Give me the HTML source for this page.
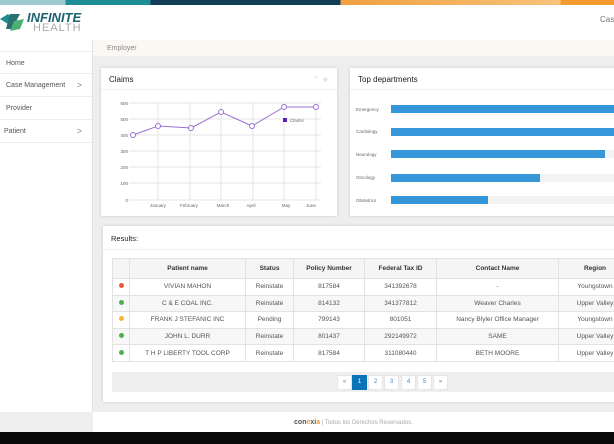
<!DOCTYPE html>
<html><head><style>
*{margin:0;padding:0;box-sizing:border-box}
body{width:614px;height:444px;overflow:hidden;background:#eeeeee;font-family:"Liberation Sans",sans-serif;position:relative;color:#444}
.a{position:absolute}
.top{left:0;top:0;width:614px;height:5px;background:linear-gradient(90deg,#9fc9cf 0,#9fc9cf 65px,#1e8d96 66px,#1e8d96 150px,#123d57 151px,#123d57 340px,#f0a040 341px,#f7c27a 560px,#f29a2e 561px)}
.hdr{left:0;top:5px;width:614px;height:35px;background:#fff}
.side{left:0;top:40px;width:93px;height:372px;background:#fff;border-right:1px solid #e4e4e4;padding-top:11px}
.side div{height:23px;border-bottom:1px solid #eee;font-size:7px;color:#555;padding:8px 6px;position:relative}
.side div:first-child{border-top:1px solid #eee}
.side span{position:absolute;right:10px;top:6px;font-size:9px;color:#888}
.emp{left:93px;top:40px;width:521px;height:17px;background:#fbf8f3;border-bottom:1px solid #eee;font-size:7px;color:#888;padding:5px 14px}
.panel{background:#fff;box-shadow:0 0 3px rgba(0,0,0,.15)}
.ttl{font-size:8px;color:#222;padding:7px 8px;border-bottom:1px solid #f0f0f0;height:22px}
table{border-collapse:collapse;position:absolute;left:9px;top:32px;width:520px;font-size:6.5px;color:#555}
td,th{border:1px solid #e2e2e2;text-align:center;height:16.6px;padding:0}
th{height:20px;background:#f5f5f5;color:#333;font-size:6.5px}
tr:nth-child(odd) td{background:#f7f7f7}
.d{display:inline-block;width:5px;height:5px;border-radius:50%}
.pg{position:absolute;left:9px;top:146px;width:520px;height:20px;background:#efefef}
.pg span{position:absolute;top:3px;width:15px;height:15px;background:#fff;border:1px solid #e5e5e5;font-size:6px;color:#3b8bd0;text-align:center;line-height:13px}
</style></head><body>
<div class="a top"></div>
<div class="a hdr">
<svg class="a" style="left:0;top:6px" width="30" height="22"><path d="M0 8 L8 3 L14 8 L8 13Z" fill="#1e8d96"/><path d="M10 3 L20 3 L12 18 L6 18Z" fill="#2b6f6f"/><path d="M14 10 L24 8 L20 18 L10 20Z" fill="#4cb072"/></svg>
<div class="a" style="left:27px;top:5px;font-size:13px;font-weight:bold;font-style:italic;color:#1b6370">INFINITE</div>
<div class="a" style="left:33px;top:17px;font-size:11px;color:#aaa;letter-spacing:1px">HEALTH</div>
<div class="a" style="left:600px;top:10px;font-size:8px;color:#777">Cas</div>
</div>
<div class="a side"><div>Home</div><div>Case Management<span>&gt;</span></div><div>Provider</div><div style="padding-left:4px">Patient<span>&gt;</span></div></div>
<div class="a emp">Employer</div>

<div class="a panel" style="left:101px;top:68px;width:236px;height:148px">
<div class="ttl">Claims <span style="float:right;color:#ddd">⌃ ★</span></div>
<svg class="a" style="left:0;top:0" width="236" height="148">
<g stroke="#e6e6e6" stroke-width="1">
<line x1="28" y1="35" x2="220" y2="35"/><line x1="28" y1="51" x2="220" y2="51"/><line x1="28" y1="67" x2="220" y2="67"/><line x1="28" y1="83" x2="220" y2="83"/><line x1="28" y1="99" x2="220" y2="99"/><line x1="28" y1="115" x2="220" y2="115"/><line x1="28" y1="132" x2="220" y2="132"/>
<line x1="57" y1="35" x2="57" y2="132"/><line x1="89" y1="35" x2="89" y2="132"/><line x1="120" y1="35" x2="120" y2="132"/><line x1="152" y1="35" x2="152" y2="132"/><line x1="183" y1="35" x2="183" y2="132"/><line x1="215" y1="35" x2="215" y2="132"/>
</g>
<g font-size="4.5" fill="#666" text-anchor="end" font-family="Liberation Sans">
<text x="27" y="37">600</text><text x="27" y="53">500</text><text x="27" y="69">400</text><text x="27" y="85">300</text><text x="27" y="101">200</text><text x="27" y="117">100</text><text x="27" y="134">0</text></g>
<g font-size="4.5" fill="#666" text-anchor="middle" font-family="Liberation Sans">
<text x="57" y="139">January</text><text x="88" y="139">February</text><text x="122" y="139">March</text><text x="150" y="139">April</text><text x="185" y="139">May</text><text x="210" y="139">June</text></g>
<polyline points="32,67 57,58 90,60 120,44 151,58 183,39 215,39" fill="none" stroke="#9b6fd6" stroke-width="1"/>
<g fill="#fff" stroke="#9b6fd6" stroke-width="1"><circle cx="32" cy="67" r="2.5"/><circle cx="57" cy="58" r="2.5"/><circle cx="90" cy="60" r="2.5"/><circle cx="120" cy="44" r="2.5"/><circle cx="151" cy="58" r="2.5"/><circle cx="183" cy="39" r="2.5"/><circle cx="215" cy="39" r="2.5"/></g>
<rect x="182" y="50" width="4" height="4" fill="#5a1fb0"/><text x="189" y="54" font-size="4.5" fill="#666">Claims</text>
</svg>
</div>

<div class="a panel" style="left:350px;top:68px;width:270px;height:148px">
<div class="ttl">Top departments</div>
<svg class="a" style="left:0;top:0" width="270" height="148">
<g font-size="4.5" fill="#666" font-family="Liberation Sans">
<text x="6" y="43">Emergency</text><text x="6" y="65">Cardiology</text><text x="6" y="88">Neurology</text><text x="6" y="111">Oncology</text><text x="6" y="134">Obstetrics</text></g>
<g fill="#f3f3f3"><rect x="41" y="37" width="230" height="8"/><rect x="41" y="60" width="230" height="8"/><rect x="41" y="82" width="230" height="8"/><rect x="41" y="106" width="230" height="8"/><rect x="41" y="128" width="230" height="8"/></g>
<g fill="#3596d9"><rect x="41" y="37" width="230" height="8"/><rect x="41" y="60" width="230" height="8"/><rect x="41" y="82" width="214" height="8"/><rect x="41" y="106" width="149" height="8"/><rect x="41" y="128" width="97" height="8"/></g>
</svg>
</div>

<div class="a panel" style="left:103px;top:226px;width:520px;height:176px">
<div class="ttl" style="height:24px;padding-top:8px;font-size:7.5px">Results:</div>
<table>
<tr><th style="width:17px"></th><th style="width:116px">Patient name</th><th style="width:48px">Status</th><th style="width:71px">Policy Number</th><th style="width:72px">Federal Tax ID</th><th style="width:122px">Contact Name</th><th>Region</th></tr>
<tr><td><span class="d" style="background:#f0533c"></span></td><td>VIVIAN MAHON</td><td>Reinstate</td><td>817584</td><td>341392678</td><td>-</td><td>Youngstown</td></tr>
<tr><td><span class="d" style="background:#4caf50"></span></td><td>C &amp; E COAL INC.</td><td>Reinstate</td><td>814132</td><td>341377812</td><td>Weaver Charles</td><td>Upper Valley</td></tr>
<tr><td><span class="d" style="background:#f5b62e"></span></td><td>FRANK J STEFANIC INC</td><td>Pending</td><td>799143</td><td>801051</td><td>Nancy Blyler Office Manager</td><td>Youngstown</td></tr>
<tr><td><span class="d" style="background:#4caf50"></span></td><td>JOHN L. DURR</td><td>Reinstate</td><td>801437</td><td>292149972</td><td>SAME</td><td>Upper Valley</td></tr>
<tr><td><span class="d" style="background:#4caf50"></span></td><td>T H P LIBERTY TOOL CORP</td><td>Reinstate</td><td>817584</td><td>311080440</td><td>BETH MOORE</td><td>Upper Valley</td></tr>
</table>
<div class="pg">
<span style="left:225px">«</span><span style="left:240px;background:#0b73b8;color:#fff;border-color:#0b73b8">1</span><span style="left:256px">2</span><span style="left:272px">3</span><span style="left:289px">4</span><span style="left:305px">5</span><span style="left:321px">»</span>
</div>
</div>

<div class="a" style="left:93px;top:412px;width:521px;height:20px;background:#fff;font-size:6px;color:#aaa;text-align:center;padding-top:7px">
<b style="color:#555;font-size:7px">con<span style="color:#f39c1f">e</span>xi<span style="color:#f39c1f">a</span></b> | Todos los Derechos Reservados.</div>
<div class="a" style="left:0;top:432px;width:614px;height:12px;background:#0a0a0a"></div>
</body></html>
